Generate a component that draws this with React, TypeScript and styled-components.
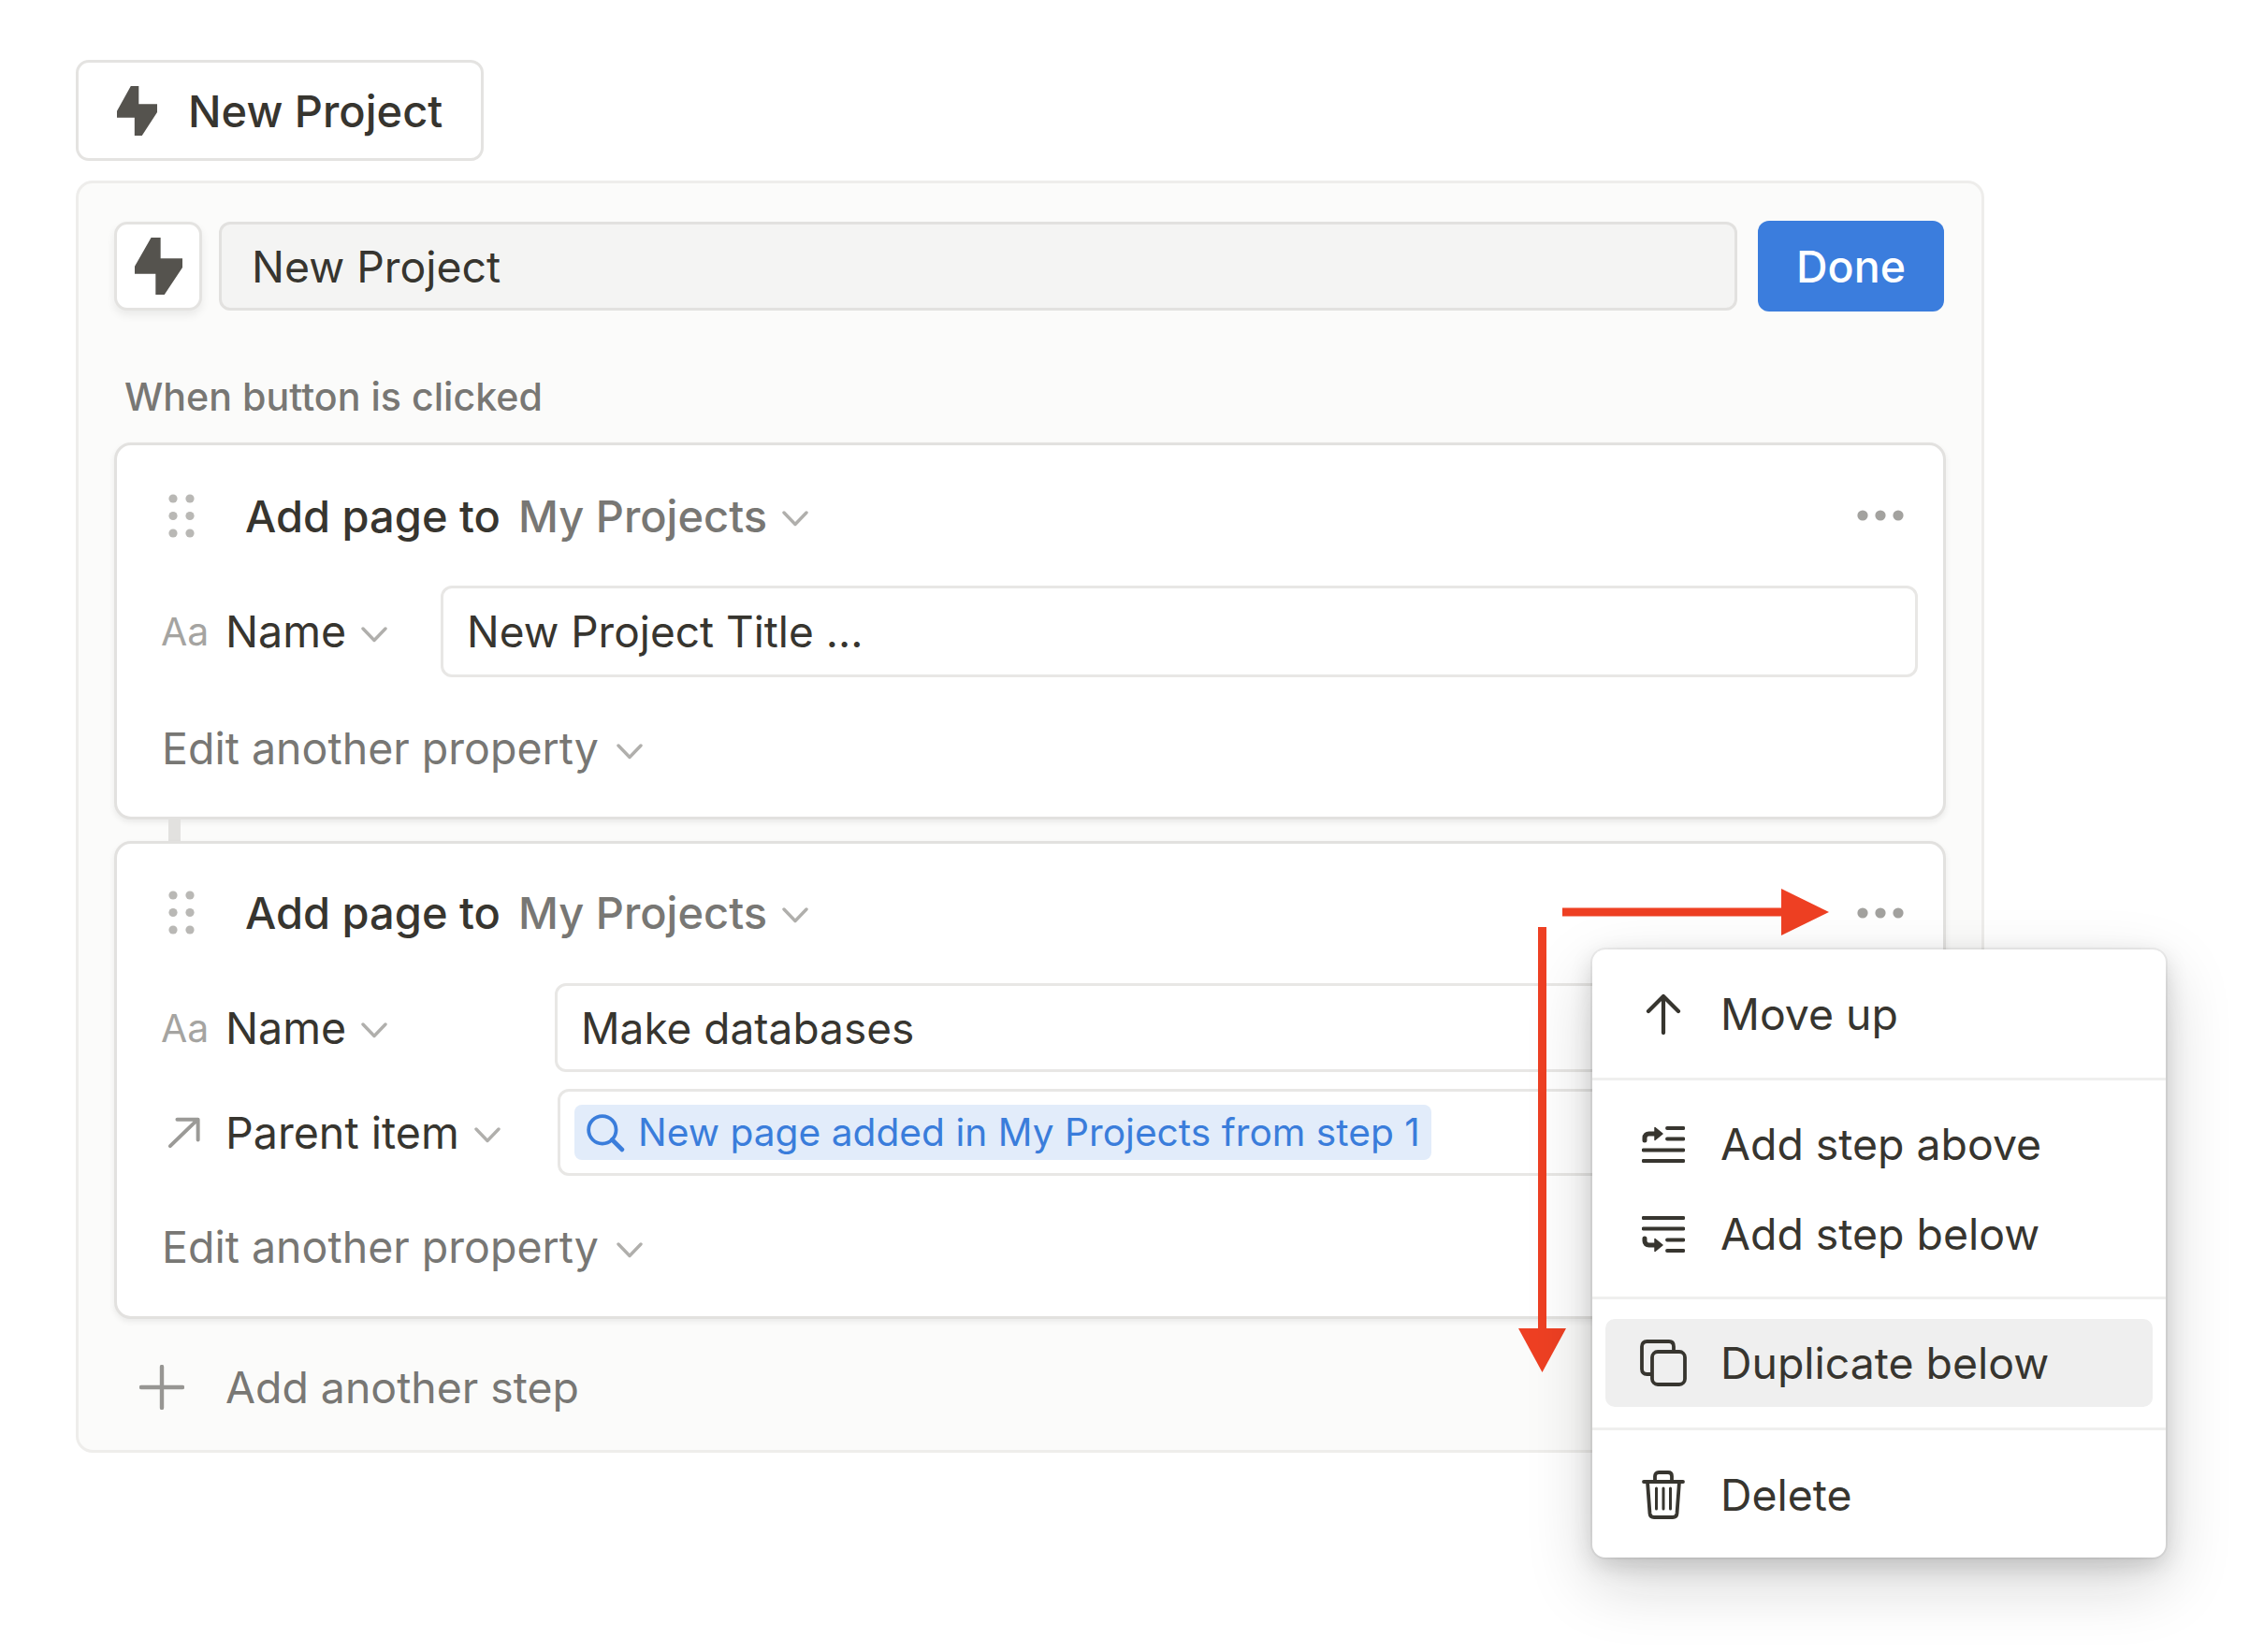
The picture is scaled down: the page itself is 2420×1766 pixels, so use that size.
import styled, { createGlobalStyle } from "styled-components";

const GlobalStyle = createGlobalStyle`
  html, body { margin: 0; padding: 0; background: #fff; }
  body { font-family: "Inter", "Liberation Sans", sans-serif; color: #37352f; }
  * { box-sizing: border-box; }
`;

const Bolt = ({ w, h }: { w: number; h: number }) => (
  <svg width={w} height={h} viewBox="0 0 45 53" preserveAspectRatio="none">
    <path
      d="M15.5 0H24.4V19.3H45V27.9L28 53H19.7V33.7H0V26.8Z"
      fill="#55534e"
    />
  </svg>
);

const Chevron = () => (
  <ChevronSvg width="28" height="17" viewBox="0 0 28 17">
    <path d="M2 2L14 14.5L26 2" fill="none" stroke="#b0afac" strokeWidth="3.4" strokeLinecap="round" strokeLinejoin="round" />
  </ChevronSvg>
);

const DragDots = () => (
  <svg width="28" height="47" viewBox="0 0 28 47">
    {[5, 23.5, 42].map((y) => (
      <g key={y}>
        <circle cx="5" cy={y} r="4.6" fill="#b9b8b5" />
        <circle cx="23" cy={y} r="4.6" fill="#b9b8b5" />
      </g>
    ))}
  </svg>
);

const MoreDots = () => (
  <svg width="50" height="12" viewBox="0 0 50 12">
    <circle cx="6" cy="6" r="5.6" fill="#a3a29f" />
    <circle cx="25" cy="6" r="5.6" fill="#a3a29f" />
    <circle cx="44" cy="6" r="5.6" fill="#a3a29f" />
  </svg>
);

const RelationIcon = () => (
  <svg width="36" height="34" viewBox="0 0 38 36">
    <path d="M3 33L34 3M11 3H34.5V26" fill="none" stroke="#9b9a97" strokeWidth="4.2" strokeLinecap="round" strokeLinejoin="round" />
  </svg>
);

const SearchIcon = () => (
  <svg width="42" height="42" viewBox="0 0 40 40">
    <circle cx="17" cy="17" r="14" fill="none" stroke="#3a7ddb" strokeWidth="3.6" />
    <path d="M27 27L37 37" fill="none" stroke="#3a7ddb" strokeWidth="4.6" strokeLinecap="round" />
  </svg>
);

const PlusIcon = () => (
  <svg width="48" height="48" viewBox="0 0 48 48">
    <path d="M24 2V46M2 24H46" fill="none" stroke="#979693" strokeWidth="4.4" strokeLinecap="round" />
  </svg>
);

const ArrowUpIcon = () => (
  <svg width="38" height="44" viewBox="0 0 38 44">
    <path d="M19 42V3M3 19L19 3L35 19" fill="none" stroke="#37352f" strokeWidth="4.2" strokeLinecap="round" strokeLinejoin="round" />
  </svg>
);

const StepIcon = ({ flip }: { flip?: boolean }) => (
  <svg width="46" height="39" viewBox="0 0 46 39" style={flip ? { transform: "scaleY(-1)" } : undefined}>
    <path d="M27 2H44.5M27 13.5H44.5M1.5 25.5H44.5M1.5 37H44.5" fill="none" stroke="#37352f" strokeWidth="3.8" strokeLinecap="round" />
    <path d="M3 15V12.5C3 9.5 5 8 7.5 8H15" fill="none" stroke="#37352f" strokeWidth="5" strokeLinecap="round" />
    <path d="M14 1.5L22 8L14 14.5Z" fill="#37352f" stroke="#37352f" strokeWidth="1.5" strokeLinejoin="round" />
  </svg>
);

const CopyIcon = () => (
  <svg width="50" height="50" viewBox="0 0 50 50">
    <path d="M11.5 37H7.5C4 37 2 35 2 31.5V7.5C2 4 4 2 7.5 2H31C34.5 2 36 4 36 7.5V12" fill="none" stroke="#37352f" strokeWidth="3.8" strokeLinecap="round" />
    <rect x="13" y="13" width="35" height="35" rx="6" fill="none" stroke="#37352f" strokeWidth="3.8" />
  </svg>
);

const TrashIcon = () => (
  <svg width="46" height="52" viewBox="0 0 46 52">
    <path d="M2 12H44M14 11V6C14 3.5 15.5 2 18 2H28C30.5 2 32 3.5 32 6V11" fill="none" stroke="#37352f" strokeWidth="3.8" strokeLinecap="round" />
    <path d="M6 12L8.5 46C8.8 49 10.5 50 13 50H33C35.5 50 37.2 49 37.5 46L40 12" fill="none" stroke="#37352f" strokeWidth="3.8" />
    <path d="M15.5 19V41M23 19V41M30.5 19V41" fill="none" stroke="#37352f" strokeWidth="3" strokeLinecap="round" />
  </svg>
);

export default function App() {
  return (
    <Page>
      <GlobalStyle />
      <TriggerButton>
        <Bolt w={43} h={53} />
        <TriggerText>New Project</TriggerText>
      </TriggerButton>

      <Panel>
        <HeaderRow>
          <IconBox>
            <Bolt w={51} h={61} />
          </IconBox>
          <NameField>New Project</NameField>
          <DoneButton>Done</DoneButton>
        </HeaderRow>

        <SectionLabel>When button is clicked</SectionLabel>

        <Card $height={403}>
          <StepHead $height={150}>
            <DragDots />
            <StepTitle>Add page to</StepTitle>
            <StepTarget>My Projects</StepTarget>
            <Chevron />
            <MoreWrap>
              <MoreDots />
            </MoreWrap>
          </StepHead>
          <PropRow $height={98}>
            <PropLabel $width={299}>
              <PropGlyph>Aa</PropGlyph>
              <PropName>Name</PropName>
              <Chevron />
            </PropLabel>
            <ValueField>New Project Title ...</ValueField>
          </PropRow>
          <EditRow $top={28}>
            <EditText>Edit another property</EditText>
            <Chevron />
          </EditRow>
        </Card>

        <Connector />

        <Card $height={511}>
          <StepHead $height={149} $bottom={2}>
            <DragDots />
            <StepTitle>Add page to</StepTitle>
            <StepTarget>My Projects</StepTarget>
            <Chevron />
            <MoreWrap>
              <MoreDots />
            </MoreWrap>
          </StepHead>
          <PropRow $height={95}>
            <PropLabel $width={421}>
              <PropGlyph>Aa</PropGlyph>
              <PropName>Name</PropName>
              <Chevron />
            </PropLabel>
            <ValueField>Make databases</ValueField>
          </PropRow>
          <PropRow $height={93} $top={18}>
            <PropLabel $width={424}>
              <RelationSlot>
                <RelationIcon />
              </RelationSlot>
              <PropName>Parent item</PropName>
              <Chevron />
            </PropLabel>
            <ValueField>
              <Pill>
                <SearchIcon />
                New page added in My Projects from step 1
              </Pill>
            </ValueField>
          </PropRow>
          <EditRow $top={28}>
            <EditText>Edit another property</EditText>
            <Chevron />
          </EditRow>
        </Card>

        <AddStepRow>
          <PlusIcon />
          <AddStepText>Add another step</AddStepText>
        </AddStepRow>
      </Panel>

      <ArrowRight viewBox="0 0 285 50" width="285" height="50">
        <path d="M0 25H240" stroke="#ee4023" strokeWidth="9" />
        <path d="M234 0L285 25L234 50Z" fill="#ee4023" />
      </ArrowRight>
      <ArrowDown viewBox="0 0 51 476" width="51" height="476">
        <path d="M25.5 0V435" stroke="#ee4023" strokeWidth="9" />
        <path d="M0 429H51L25.5 476Z" fill="#ee4023" />
      </ArrowDown>

      <Menu>
        <MenuSection $height={140} $pad={22}>
          <MenuItem>
            <MenuIcon><ArrowUpIcon /></MenuIcon>
            Move up
          </MenuItem>
        </MenuSection>
        <MenuSection $height={234} $pad={21}>
          <MenuItem>
            <MenuIcon><StepIcon /></MenuIcon>
            Add step above
          </MenuItem>
          <MenuItem>
            <MenuIcon><StepIcon flip /></MenuIcon>
            Add step below
          </MenuItem>
        </MenuSection>
        <MenuSection $height={140} $pad={21}>
          <MenuItem $active>
            <MenuIcon><CopyIcon /></MenuIcon>
            Duplicate below
          </MenuItem>
        </MenuSection>
        <MenuSection $height={136} $pad={22} $last>
          <MenuItem>
            <MenuIcon><TrashIcon /></MenuIcon>
            Delete
          </MenuItem>
        </MenuSection>
      </Menu>
    </Page>
  );
}

const Page = styled.div`
  position: relative;
  width: 2420px;
  height: 1766px;
  padding: 64px 0 0 81px;
  overflow: hidden;
  background: #fff;
`;
const ChevronSvg = styled.svg`
  flex: none;
  position: relative;
  top: 3px;
`;
const TriggerButton = styled.div`
  width: 436px;
  height: 108px;
  display: flex;
  align-items: center;
  padding-left: 41px;
  border: 3px solid #e4e3e1;
  border-radius: 14px;
  background: #fff;
`;
const TriggerText = styled.span`
  margin-left: 33px;
  font-size: 47px;
  font-weight: 500;
  color: #37352f;
`;
const Panel = styled.div`
  width: 2040px;
  height: 1360px;
  margin-top: 21px;
  padding: 41px 38px 0 38px;
  border: 3px solid #eeedeb;
  border-radius: 18px;
  background: #fbfbfa;
`;
const HeaderRow = styled.div`
  display: flex;
  height: 95px;
  margin-right: 2px;
`;
const IconBox = styled.div`
  width: 94px;
  display: flex;
  align-items: center;
  justify-content: center;
  border: 3px solid #e4e3e1;
  border-radius: 14px;
  background: #fff;
  box-shadow: 0 5px 10px rgba(15, 15, 15, 0.07);
`;
const NameField = styled.div`
  flex: 1;
  display: flex;
  align-items: center;
  margin: 0 22px 0 18px;
  padding-left: 32px;
  border: 3px solid #e2e1df;
  border-radius: 12px;
  background: #f4f4f3;
  font-size: 46.4px;
  color: #37352f;
`;
const DoneButton = styled.div`
  width: 199px;
  margin: -1px 0;
  display: flex;
  align-items: center;
  justify-content: center;
  border-radius: 12px;
  background: #3b7ddd;
  color: #fff;
  font-size: 46.5px;
  font-weight: 500;
`;
const SectionLabel = styled.div`
  height: 40px;
  margin: 72px 0 29px 11px;
  font-size: 41.2px;
  line-height: 40px;
  font-weight: 500;
  color: #787774;
`;
const Card = styled.div<{ $height: number }>`
  height: ${(p) => p.$height}px;
  padding: 0 27px 0 47px;
  border: 3px solid #e2e1df;
  border-radius: 18px;
  background: #fff;
  box-shadow: 0 3px 6px rgba(15, 15, 15, 0.07);
`;
const Connector = styled.div`
  width: 13px;
  height: 23px;
  margin-left: 58px;
  background: #e2e1df;
`;
const StepHead = styled.div<{ $height: number; $bottom?: number }>`
  height: ${(p) => p.$height}px;
  display: flex;
  align-items: center;
  padding-left: 8px;
  padding-bottom: ${(p) => p.$bottom || 0}px;
`;
const StepTitle = styled.span`
  margin-left: 54px;
  font-size: 47px;
  font-weight: 500;
  color: #37352f;
`;
const StepTarget = styled.span`
  margin: 0 16px 0 19px;
  font-size: 47px;
  font-weight: 500;
  color: #787774;
`;
const MoreWrap = styled.div`
  margin-left: auto;
  margin-right: 15px;
  display: flex;
`;
const PropRow = styled.div<{ $height: number; $top?: number }>`
  height: ${(p) => p.$height}px;
  margin-top: ${(p) => p.$top || 0}px;
  display: flex;
  align-items: center;
`;
const PropLabel = styled.div<{ $width: number }>`
  width: ${(p) => p.$width}px;
  display: flex;
  align-items: center;
  flex: none;
`;
const PropGlyph = styled.span`
  width: 69px;
  font-size: 41px;
  color: #a5a4a1;
`;
const RelationSlot = styled.span`
  width: 69px;
  display: flex;
  padding-left: 7px;
`;
const PropName = styled.span`
  margin-right: 16px;
  font-size: 46.6px;
  color: #37352f;
`;
const ValueField = styled.div`
  flex: 1;
  height: 100%;
  display: flex;
  align-items: center;
  padding-left: 25px;
  border: 3px solid #e8e7e5;
  border-radius: 12px;
  background: #fff;
  font-size: 46px;
  color: #37352f;
`;
const Pill = styled.div`
  height: 59px;
  margin-left: -10px;
  display: flex;
  align-items: center;
  gap: 14px;
  padding: 0 12px;
  border-radius: 8px;
  background: #e2ecfa;
  color: #3a7ddb;
  font-size: 40.7px;
`;
const EditRow = styled.div<{ $top: number }>`
  height: 96px;
  margin-top: ${(p) => p.$top}px;
  margin-left: 1px;
  display: flex;
  align-items: center;
  gap: 19px;
`;
const EditText = styled.span`
  font-size: 46.5px;
  color: #787774;
`;
const AddStepRow = styled.div`
  height: 74px;
  margin-top: 36px;
  margin-left: 27px;
  display: flex;
  align-items: center;
`;
const AddStepText = styled.span`
  margin-left: 44px;
  font-size: 46.4px;
  color: #787774;
`;
const ArrowRight = styled.svg`
  position: absolute;
  left: 1670px;
  top: 950px;
`;
const ArrowDown = styled.svg`
  position: absolute;
  left: 1623px;
  top: 991px;
`;
const Menu = styled.div`
  position: absolute;
  left: 1702px;
  top: 1015px;
  width: 613px;
  height: 650px;
  border-radius: 14px;
  background: #fff;
  box-shadow: 0 0 0 2px rgba(15, 15, 15, 0.05), 0 8px 24px rgba(15, 15, 15, 0.15), 0 26px 70px rgba(15, 15, 15, 0.18);
`;
const MenuSection = styled.div<{ $height: number; $pad: number; $last?: boolean }>`
  height: ${(p) => p.$height}px;
  display: flex;
  flex-direction: column;
  gap: 2px;
  padding: ${(p) => p.$pad}px 14px 0;
  border-bottom: ${(p) => (p.$last ? "none" : "3px solid #efefee")};
`;
const MenuItem = styled.div<{ $active?: boolean }>`
  height: 94px;
  flex: none;
  display: flex;
  align-items: center;
  border-radius: 10px;
  background: ${(p) => (p.$active ? "#efefef" : "transparent")};
  font-size: 46.4px;
  color: #37352f;
`;
const MenuIcon = styled.span`
  width: 123px;
  display: flex;
  justify-content: center;
  flex: none;
`;
